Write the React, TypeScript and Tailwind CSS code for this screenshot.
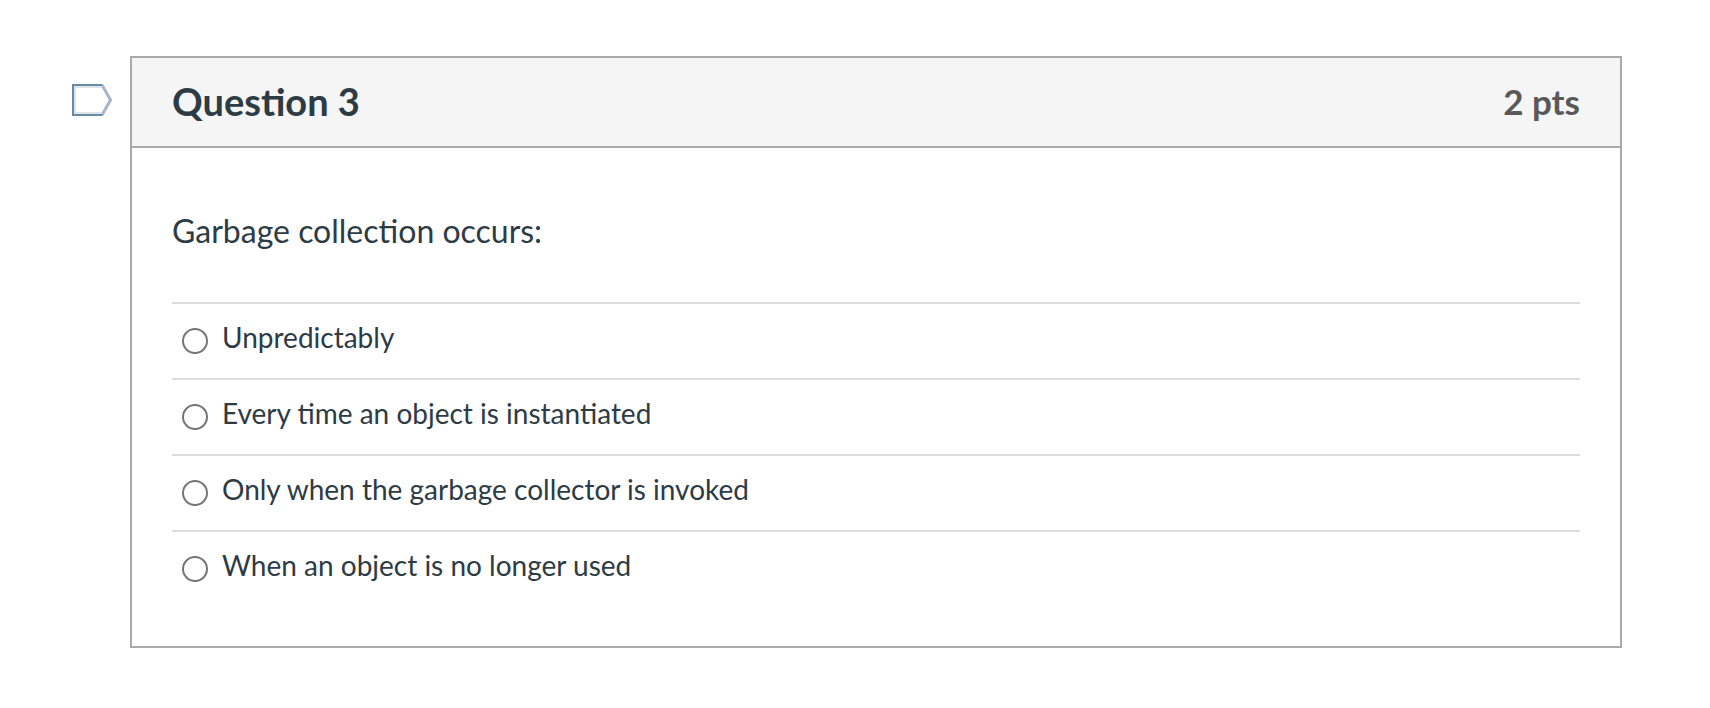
const answers = [
    'Unpredictably',
    'Every time an object is instantiated',
    'Only when the garbage collector is invoked',
    'When an object is no longer used',
];

export default function App() {
    return (
        <main className="flex items-start gap-[18px] bg-white pt-[56px] pr-[88px] pb-[60px] pl-[72px] font-['Lato',sans-serif] text-[#2d3b45]">
            <FlagButton />
            <Question />
        </main>
    );
}

function FlagButton() {
    return (
        <button type="button" aria-label="Flag question" className="mt-[28px] shrink-0">
            <svg width="40" height="32" viewBox="0 0 40 32" fill="none" className="block">
                <path d="M30 1 38.5 16 30 31" stroke="#a3b7c6" strokeWidth="3" />
                <path d="M30 3H3v26h27" stroke="#dce4ea" strokeWidth="2" />
                <path d="M30.5 1H1v30h29.5" stroke="#668aa5" strokeWidth="2" />
            </svg>
        </button>
    );
}

function Question() {
    return (
        <section className="min-w-0 flex-1 border-2 border-[#aaa]">
            <header className="flex h-[90px] items-center justify-between border-b-2 border-[#aaa] bg-[#f5f5f5] px-[40px] pb-[2px]">
                <h2 className="text-[38px] leading-[48px] font-bold">Question 3</h2>
                <span className="text-[35px] leading-[48px] font-bold text-[#595959]">2 pts</span>
            </header>
            <div className="px-[40px] pt-[58px] pb-[40px]">
                <p id="question-text" className="mb-[46px] text-[32px] leading-[50px]">
                    Garbage collection occurs:
                </p>
                <div role="radiogroup" aria-labelledby="question-text">
                    {answers.map((answer, index) => (
                        <Answer key={answer} id={`answer-${index}`} text={answer} />
                    ))}
                </div>
            </div>
        </section>
    );
}

type AnswerProps = {
    id: string;
    text: string;
};

function Answer({ id, text }: AnswerProps) {
    return (
        <div className="flex h-[76px] items-start gap-[14px] border-t-2 border-[#ddd] pl-[10px]">
            <input
                type="radio"
                name="answer"
                id={id}
                className="mt-[24px] size-[26px] shrink-0 appearance-none rounded-full border-2 border-[#767676] bg-white checked:border-[7px]"
            />
            <label htmlFor={id} className="mt-[13px] text-[28px] leading-[40px]">
                {text}
            </label>
        </div>
    );
}
